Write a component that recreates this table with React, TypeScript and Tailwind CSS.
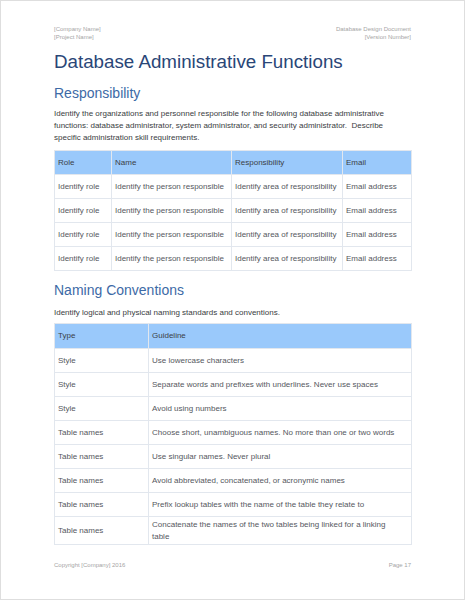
import React from 'react';

const people = Array.from({ length: 4 }, () => ({
  role: 'Identify role',
  name: 'Identify the person responsible',
  resp: 'Identify area of responsibility',
  email: 'Email address',
}));

const rules = [
  { type: 'Style', text: 'Use lowercase characters' },
  { type: 'Style', text: 'Separate words and prefixes with underlines. Never use spaces' },
  { type: 'Style', text: 'Avoid using numbers' },
  { type: 'Table names', text: 'Choose short, unambiguous names. No more than one or two words' },
  { type: 'Table names', text: 'Use singular names. Never plural' },
  { type: 'Table names', text: 'Avoid abbreviated, concatenated, or acronymic names' },
  { type: 'Table names', text: 'Prefix lookup tables with the name of the table they relate to' },
  { type: 'Table names', text: 'Concatenate the names of the two tables being linked for a linking table' },
];

const th = 'border border-[#e2e7ee] px-[3px] text-left font-normal text-[#3b3f47]';
const td = 'border border-[#e2e7ee] px-[3px] text-[#55585e]';

export default function App() {
  return (
    <div className="w-[465px] h-[600px] bg-white border border-[#dedede] px-[53px] pt-[24px] flex flex-col font-['Liberation_Sans',Arial,sans-serif]">
      {/* running header */}
      <div className="flex justify-between text-[6px] leading-[8px] text-[#a5a5a5]">
        <div>
          <div>[Company Name]</div>
          <div>[Project Name]</div>
        </div>
        <div className="text-right">
          <div>Database Design Document</div>
          <div>[Version Number]</div>
        </div>
      </div>

      <h1 className="mt-[8px] text-[18.75px] leading-[26px] text-[#2a4677]">Database Administrative Functions</h1>

      <h2 className="mt-[9px] text-[14px] leading-[18px] text-[#3d6aa6]">Responsibility</h2>
      <p className="mt-[6px] text-[8px] leading-[12px] text-[#3a3d42]">
        Identify the organizations and personnel responsible for the following database administrative
        functions: database administrator, system administrator, and security administrator.&nbsp; Describe
        specific administration skill requirements.
      </p>

      <table className="mt-[6px] w-[357px] table-fixed border-collapse text-[8px] leading-[11px]">
        <colgroup>
          <col className="w-[57px]" />
          <col className="w-[120px]" />
          <col className="w-[111px]" />
          <col className="w-[69px]" />
        </colgroup>
        <thead>
          <tr className="h-[24px] bg-[#9ac9fb]">
            <th className={th}>Role</th>
            <th className={th}>Name</th>
            <th className={th}>Responsibility</th>
            <th className={th}>Email</th>
          </tr>
        </thead>
        <tbody>
          {people.map((p, i) => (
            <tr key={i} className="h-[24px]">
              <td className={td}>{p.role}</td>
              <td className={td}>{p.name}</td>
              <td className={td}>{p.resp}</td>
              <td className={td}>{p.email}</td>
            </tr>
          ))}
        </tbody>
      </table>

      <h2 className="mt-[10px] text-[14px] leading-[18px] text-[#3d6aa6]">Naming Conventions</h2>
      <p className="mt-[8px] text-[8px] leading-[12px] text-[#3a3d42]">
        Identify logical and physical naming standards and conventions.
      </p>

      <table className="mt-[4px] w-[357px] table-fixed border-collapse text-[8px] leading-[12px]">
        <colgroup>
          <col className="w-[94px]" />
          <col className="w-[263px]" />
        </colgroup>
        <thead>
          <tr className="h-[25px] bg-[#9ac9fb]">
            <th className={th}>Type</th>
            <th className={th}>Guideline</th>
          </tr>
        </thead>
        <tbody>
          {rules.map((r, i) => (
            <tr key={i} className={i === rules.length - 1 ? 'h-[28px]' : 'h-[24px]'}>
              <td className={td}>{r.type}</td>
              <td className={`${td} pr-[8px]`}>{r.text}</td>
            </tr>
          ))}
        </tbody>
      </table>

      <div className="mt-[16px] flex justify-between text-[6px] leading-[8px] text-[#a5a5a5]">
        <span>Copyright [Company] 2016</span>
        <span>Page 17</span>
      </div>
    </div>
  );
}
